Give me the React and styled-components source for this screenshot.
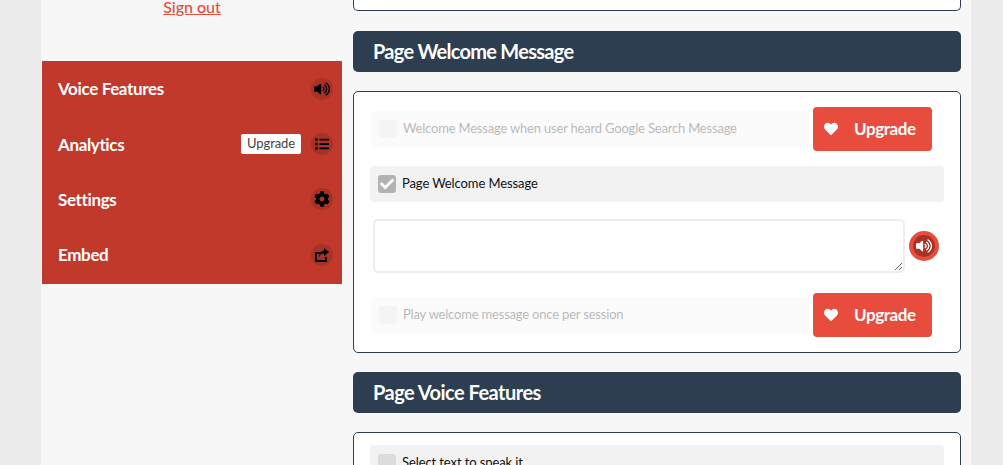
import React from "react";
import styled, { createGlobalStyle } from "styled-components";
import { FaVolumeUp, FaList, FaCog, FaHeart, FaCheck } from "react-icons/fa";

const Global = createGlobalStyle`
  html, body { margin: 0; padding: 0; height: 465px; overflow: hidden; background: #ebebeb; }
  body { font-family: Lato, "Open Sans", sans-serif; }
  * { box-sizing: border-box; }
`;

const Page = styled.div`
  width: 930px;
  height: 465px;
  margin-left: 41px;
  display: flex;
  background: #f7f7f7;
  overflow: hidden;
`;

const Sidebar = styled.aside`
  width: 301px;
  flex: none;
  padding-left: 1px;
`;

const SignOutRow = styled.div`
  height: 61px;
  text-align: center;
  line-height: 14px;
`;

const SignOut = styled.a`
  font-size: 16px;
  font-weight: 500;
  color: #e74c3c;
  text-decoration: underline;
`;

const Menu = styled.nav`
  background: #c0392b;
  height: 223px;
`;

const MenuItem = styled.div`
  height: 55.4px;
  display: flex;
  align-items: center;
  padding: 0 9px 0 16px;
  color: #fff;
  font-size: 17px;
  font-weight: 700;
  letter-spacing: -0.36px;
`;

const MenuLabel = styled.span`
  flex: 1;
`;

const Badge = styled.span`
  background: #fff;
  color: #444;
  font-size: 13px;
  font-weight: 400;
  letter-spacing: -0.1px;
  line-height: 19px;
  height: 20px;
  width: 60px;
  text-align: center;
  border-radius: 2px;
  margin-right: 10px;
`;

const IconDot = styled.span`
  width: 22px;
  height: 22px;
  border-radius: 50%;
  background: #a93226;
  color: #000;
  display: flex;
  align-items: center;
  justify-content: center;
  font-size: ${(p) => p.$size || 16}px;
`;

const Main = styled.main`
  flex: 1;
  padding: 0 10px 0 11px;
`;

const PrevCard = styled.div`
  height: 12px;
  margin-top: -1px;
  background: #fff;
  border: 1px solid #2c3e50;
  border-top: 0;
  border-radius: 0 0 5px 5px;
`;

const Heading = styled.h2`
  margin: ${(p) => p.$top}px 0 19px;
  height: 41px;
  padding-left: 20px;
  background: #2c3e50;
  border-radius: 5px;
  color: #fff;
  font-size: 20px;
  font-weight: 700;
  letter-spacing: ${(p) => p.$spacing}px;
  line-height: 41px;
`;

const Card = styled.section`
  background: #fff;
  border: 1px solid #2c3e50;
  border-radius: 5px;
  padding: ${(p) => p.$top}px 16px 15px;
`;

const UpgradeLine = styled.div`
  display: flex;
  align-items: center;
  height: 44px;
  padding-left: 1px;
  padding-right: 12px;
`;

const OptionRow = styled.div`
  height: 36px;
  display: flex;
  align-items: center;
  gap: 6px;
  padding: 0 8px;
  border-radius: 4px;
  background: #f2f2f2;
  color: #111;
  font-size: 13px;
  letter-spacing: ${(p) => (p.$disabled ? -0.19 : -0.1)}px;
  flex: ${(p) => (p.$disabled ? 1 : "none")};
  margin-top: ${(p) => p.$top || 0}px;
  margin-right: ${(p) => (p.$disabled ? 3 : 0)}px;
  opacity: ${(p) => (p.$disabled ? 0.3 : 1)};
`;

const OptionLabel = styled.span`
  padding-bottom: 2px;
`;

const Tick = styled.span`
  width: 18px;
  height: 18px;
  flex: none;
  border-radius: 3px;
  background: ${(p) => (p.$on ? "#b3b3b3" : "#dcdcdc")};
  color: #fff;
  display: flex;
  align-items: center;
  justify-content: center;
  font-size: 14px;
`;

const UpgradeButton = styled.button`
  width: 119px;
  height: 44px;
  flex: none;
  border: 0;
  border-radius: 4px;
  background: #e74c3c;
  color: #fff;
  font-family: inherit;
  font-size: 17px;
  font-weight: 700;
  letter-spacing: -0.4px;
  display: flex;
  align-items: center;
  padding: 0 0 0 11px;
  gap: 16px;
`;

const UpgradeText = styled.span`
  padding-bottom: 2px;
`;

const MessageLine = styled.div`
  display: flex;
  align-items: center;
  gap: 4px;
  margin: 17px 0 20px 3px;
`;

const MessageBox = styled.textarea`
  width: 532px;
  height: 54px;
  border: 2px solid #eeeeee;
  border-radius: 5px;
  background: #fff;
  display: block;
  outline: none;
`;

const SpeakButton = styled.button`
  width: 30px;
  height: 30px;
  padding: 0;
  border: 4px solid #e74c3c;
  border-radius: 50%;
  background: #a93226;
  color: #fff;
  display: flex;
  align-items: center;
  justify-content: center;
  font-size: 16px;
`;

function ShareIcon() {
  return (
    <svg width="16" height="16" viewBox="0 0 16 16" fill="currentColor">
      <path d="M1 5h6v2H3v6h8v-3h2v5H1z" />
      <path d="M10 1l5 4-5 4V6.6C7.6 6.6 6 7.8 5 10.4 5 6.6 7 4 10 3.6z" />
    </svg>
  );
}

function Upgrade() {
  return (
    <UpgradeButton>
      <FaHeart size={14} />
      <UpgradeText>Upgrade</UpgradeText>
    </UpgradeButton>
  );
}

export default function App() {
  return (
    <Page>
      <Global />
      <Sidebar>
        <SignOutRow>
          <SignOut>Sign out</SignOut>
        </SignOutRow>
        <Menu>
          <MenuItem>
            <MenuLabel>Voice Features</MenuLabel>
            <IconDot><FaVolumeUp /></IconDot>
          </MenuItem>
          <MenuItem>
            <MenuLabel>Analytics</MenuLabel>
            <Badge>Upgrade</Badge>
            <IconDot $size={14}><FaList /></IconDot>
          </MenuItem>
          <MenuItem>
            <MenuLabel>Settings</MenuLabel>
            <IconDot><FaCog /></IconDot>
          </MenuItem>
          <MenuItem>
            <MenuLabel>Embed</MenuLabel>
            <IconDot><ShareIcon /></IconDot>
          </MenuItem>
        </Menu>
      </Sidebar>
      <Main>
        <PrevCard />
        <Heading $top={20} $spacing={-0.72}>Page Welcome Message</Heading>
        <Card $top={15}>
          <UpgradeLine>
            <OptionRow $disabled>
              <Tick />
              <OptionLabel>Welcome Message when user heard Google Search Message</OptionLabel>
            </OptionRow>
            <Upgrade />
          </UpgradeLine>
          <OptionRow $top={15}>
            <Tick $on><FaCheck /></Tick>
            <OptionLabel>Page Welcome Message</OptionLabel>
          </OptionRow>
          <MessageLine>
            <MessageBox />
            <SpeakButton><FaVolumeUp /></SpeakButton>
          </MessageLine>
          <UpgradeLine>
            <OptionRow $disabled>
              <Tick />
              <OptionLabel>Play welcome message once per session</OptionLabel>
            </OptionRow>
            <Upgrade />
          </UpgradeLine>
        </Card>
        <Heading $top={19} $spacing={-0.52}>Page Voice Features</Heading>
        <Card $top={12}>
          <OptionRow>
            <Tick />
            <OptionLabel>Select text to speak it</OptionLabel>
          </OptionRow>
        </Card>
      </Main>
    </Page>
  );
}
